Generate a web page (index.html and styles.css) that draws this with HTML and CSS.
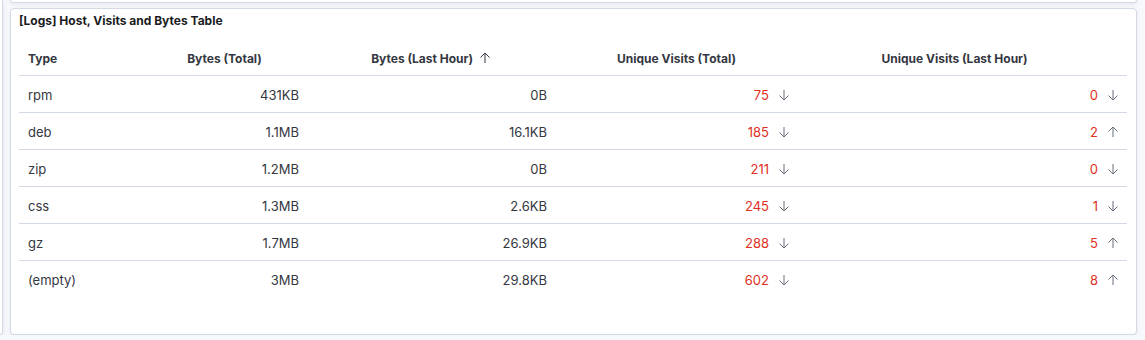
FILE: index.html
```html
<!DOCTYPE html>
<html lang="en">
<head>
<meta charset="utf-8">
<title>[Logs] Host, Visits and Bytes Table</title>
<link rel="stylesheet" href="styles.css">
</head>
<body>
<div class="dash">
  <div class="stub-left"></div>
  <div class="stub-top"></div>
  <section class="panel">
    <h2 class="panel-title">[Logs] Host, Visits and Bytes Table</h2>
    <table class="dt">
      <colgroup>
        <col class="c1"><col class="c2"><col class="c3"><col class="c4"><col class="c5">
      </colgroup>
      <thead>
        <tr>
          <th class="th-left">Type</th>
          <th class="th-second">Bytes (Total)</th>
          <th>Bytes (Last Hour) <svg class="ico ico-dark" viewBox="0 0 12 12"><path d="M6 11V1M1.5 5.5L6 1l4.5 4.5"/></svg></th>
          <th>Unique Visits (Total)</th>
          <th class="th-last">Unique Visits (Last Hour)</th>
        </tr>
      </thead>
      <tbody>
        <tr><td>rpm</td><td class="num">431KB</td><td class="num">0B</td><td class="num"><span class="red">75</span><svg class="ico" viewBox="0 0 12 12"><path d="M6 1v10M1.5 6.5L6 11l4.5-4.5"/></svg></td><td class="num"><span class="red">0</span><svg class="ico" viewBox="0 0 12 12"><path d="M6 1v10M1.5 6.5L6 11l4.5-4.5"/></svg></td></tr>
        <tr><td>deb</td><td class="num">1.1MB</td><td class="num">16.1KB</td><td class="num"><span class="red">185</span><svg class="ico" viewBox="0 0 12 12"><path d="M6 1v10M1.5 6.5L6 11l4.5-4.5"/></svg></td><td class="num"><span class="red">2</span><svg class="ico" viewBox="0 0 12 12"><path d="M6 11V1M1.5 5.5L6 1l4.5 4.5"/></svg></td></tr>
        <tr><td>zip</td><td class="num">1.2MB</td><td class="num">0B</td><td class="num"><span class="red">211</span><svg class="ico" viewBox="0 0 12 12"><path d="M6 1v10M1.5 6.5L6 11l4.5-4.5"/></svg></td><td class="num"><span class="red">0</span><svg class="ico" viewBox="0 0 12 12"><path d="M6 1v10M1.5 6.5L6 11l4.5-4.5"/></svg></td></tr>
        <tr><td>css</td><td class="num">1.3MB</td><td class="num">2.6KB</td><td class="num"><span class="red">245</span><svg class="ico" viewBox="0 0 12 12"><path d="M6 1v10M1.5 6.5L6 11l4.5-4.5"/></svg></td><td class="num"><span class="red">1</span><svg class="ico" viewBox="0 0 12 12"><path d="M6 1v10M1.5 6.5L6 11l4.5-4.5"/></svg></td></tr>
        <tr><td>gz</td><td class="num">1.7MB</td><td class="num">26.9KB</td><td class="num"><span class="red">288</span><svg class="ico" viewBox="0 0 12 12"><path d="M6 1v10M1.5 6.5L6 11l4.5-4.5"/></svg></td><td class="num"><span class="red">5</span><svg class="ico" viewBox="0 0 12 12"><path d="M6 11V1M1.5 5.5L6 1l4.5 4.5"/></svg></td></tr>
        <tr><td>(empty)</td><td class="num">3MB</td><td class="num">29.8KB</td><td class="num"><span class="red">602</span><svg class="ico" viewBox="0 0 12 12"><path d="M6 1v10M1.5 6.5L6 11l4.5-4.5"/></svg></td><td class="num"><span class="red">8</span><svg class="ico" viewBox="0 0 12 12"><path d="M6 11V1M1.5 5.5L6 1l4.5 4.5"/></svg></td></tr>
      </tbody>
    </table>
  </section>
</div>
</body>
</html>
```

FILE: styles.css
```css
html, body {
  margin: 0;
  padding: 0;
  background: #f7f8fc;
  font-family: Inter, "Liberation Sans", sans-serif;
  color: #343741;
}

.dash {
  display: grid;
  grid-template-columns: 3px 1127px;
  grid-template-rows: 3px 327px;
  column-gap: 7px;
  row-gap: 5px;
}

.stub-left {
  grid-column: 1;
  grid-row: 1 / span 2;
  background: #fff;
  border-right: 1px solid #d3dae6;
  border-bottom: 1px solid #d3dae6;
  border-bottom-right-radius: 4px;
  box-shadow: 0 1px 4px rgba(152, 162, 179, 0.25);
}

.stub-top {
  grid-column: 2;
  grid-row: 1;
  background: #fff;
  border: 1px solid #d3dae6;
  border-top: 0;
  border-radius: 0 0 4px 4px;
  box-shadow: 0 1px 4px rgba(152, 162, 179, 0.25);
}

.panel {
  grid-column: 2;
  grid-row: 2;
  box-sizing: border-box;
  background: #fff;
  border: 1px solid #d3dae6;
  border-radius: 4px;
  box-shadow: 0 2px 2px -1px rgba(152, 162, 179, 0.3), 0 1px 5px -2px rgba(152, 162, 179, 0.3);
  padding: 4px 8px 8px;
}

.panel-title {
  margin: 0;
  font-size: 12px;
  line-height: 16px;
  font-weight: 700;
  color: #1a1c21;
}

.dt {
  margin-top: 10px;
  width: 1108px;
  border-collapse: collapse;
  table-layout: fixed;
  font-size: 13px;
}

.c1 { width: 131px; }
.c2 { width: 157px; }
.c3 { width: 248px; }
.c4 { width: 243px; }
.c5 { width: 329px; }

.dt th {
  height: 34px;
  padding: 2px 8px 0;
  font-size: 12px;
  font-weight: 700;
  color: #343741;
  text-align: center;
  border-bottom: 1px solid #d3dae6;
  white-space: nowrap;
}

.dt th.th-left { text-align: left; padding-left: 9px; }
.dt th.th-second { padding-right: 16px; }
.dt th.th-last { padding-right: 24px; }

.dt td {
  height: 35px;
  padding: 1px 8px 0 9px;
  border-bottom: 1px solid #d3dae6;
  white-space: nowrap;
}

.dt tbody tr:last-child td { border-bottom: 0; }

.dt td.num { text-align: right; }

.red { color: #e0301e; }

.ico {
  width: 12px;
  height: 12px;
  margin-left: 9px;
  vertical-align: -1px;
  fill: none;
  stroke: #69707d;
  stroke-width: 1;
}

.ico-dark {
  stroke: #343741;
  margin-left: 3px;
}
```
